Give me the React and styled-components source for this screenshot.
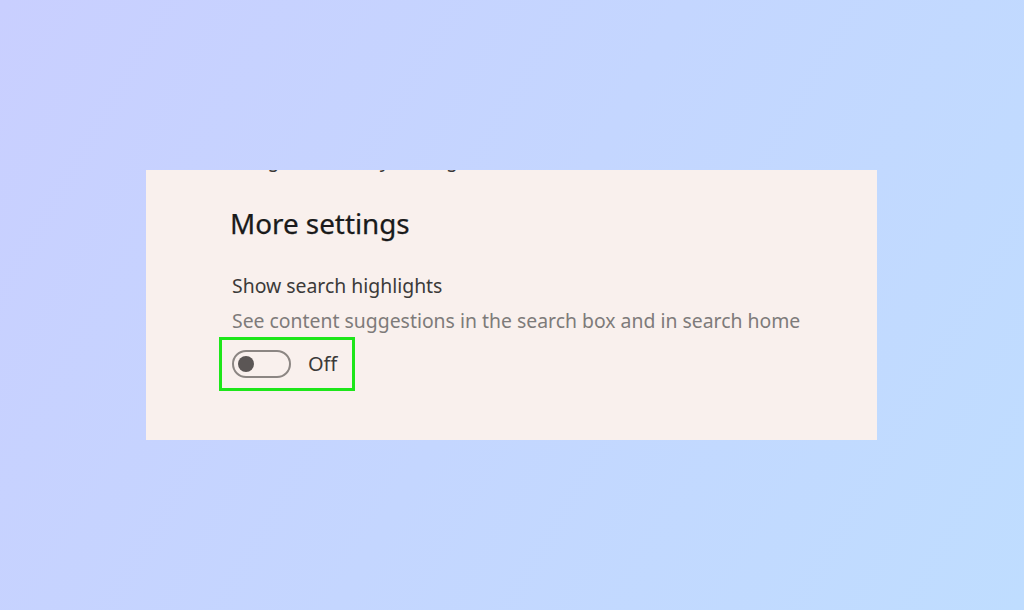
import React from "react";
import styled, { createGlobalStyle } from "styled-components";

const Global = createGlobalStyle`
  html, body { margin: 0; padding: 0; }
  body {
    width: 1024px;
    height: 610px;
    overflow: hidden;
    font-family: "Noto Sans", "Open Sans", sans-serif;
  }
`;

const Backdrop = styled.div`
  width: 1024px;
  height: 610px;
  background: linear-gradient(120deg, #c9cfff 0%, #c4d6ff 50%, #bfddff 100%);
  display: flex;
  flex-direction: column;
  align-items: flex-start;
  padding: 170px 0 0 146px;
  box-sizing: border-box;
`;

const Panel = styled.section`
  width: 731px;
  height: 270px;
  background: #f9f0ed;
  overflow: hidden;
  padding: 0 0 0 84px;
  box-sizing: border-box;
  display: flex;
  flex-direction: column;
`;

const ClippedLine = styled.div`
  margin-top: -23px;
  font-size: 19.4px;
  line-height: 26px;
  color: #3a3838;
  padding-left: 2px;
  white-space: nowrap;
`;

const Heading = styled.h2`
  margin: 32px 0 0 0;
  font-size: 27.8px;
  font-weight: 400;
  line-height: 36px;
  color: #1a1a1a;
  -webkit-text-stroke: 0.25px #1a1a1a;
`;

const Label = styled.div`
  margin-top: 32px;
  padding-left: 2px;
  font-size: 19.4px;
  line-height: 26px;
  color: #3c3a39;
`;

const Description = styled.div`
  margin-top: 9px;
  padding-left: 2px;
  font-size: 19.4px;
  line-height: 26px;
  color: #7e7b7a;
`;

const Highlight = styled.div`
  margin: 3px 0 0 -11px;
  width: 136px;
  height: 54px;
  border: 3px solid #1ee61a;
  box-sizing: border-box;
  display: flex;
  align-items: center;
  gap: 17px;
  padding-left: 10px;
`;

const Track = styled.div`
  width: 59px;
  height: 28px;
  border: 2px solid #8c8683;
  border-radius: 14px;
  box-sizing: border-box;
  display: flex;
  align-items: center;
  padding-left: ${(p) => (p.$on ? "33px" : "4px")};
  background: ${(p) => (p.$on ? "#0067c0" : "transparent")};
`;

const Knob = styled.div`
  width: 16px;
  height: 16px;
  border-radius: 50%;
  background: #5b5655;
`;

const State = styled.span`
  font-size: 20px;
  line-height: 26px;
  color: #3c3a39;
`;

export default function App() {
  return (
    <>
      <Global />
      <Backdrop>
        <Panel>
          <ClippedLine>Images in history are logs</ClippedLine>
          <Heading>More settings</Heading>
          <Label>Show search highlights</Label>
          <Description>See content suggestions in the search box and in search home</Description>
          <Highlight>
            <Track $on={false}>
              <Knob />
            </Track>
            <State>Off</State>
          </Highlight>
        </Panel>
      </Backdrop>
    </>
  );
}
